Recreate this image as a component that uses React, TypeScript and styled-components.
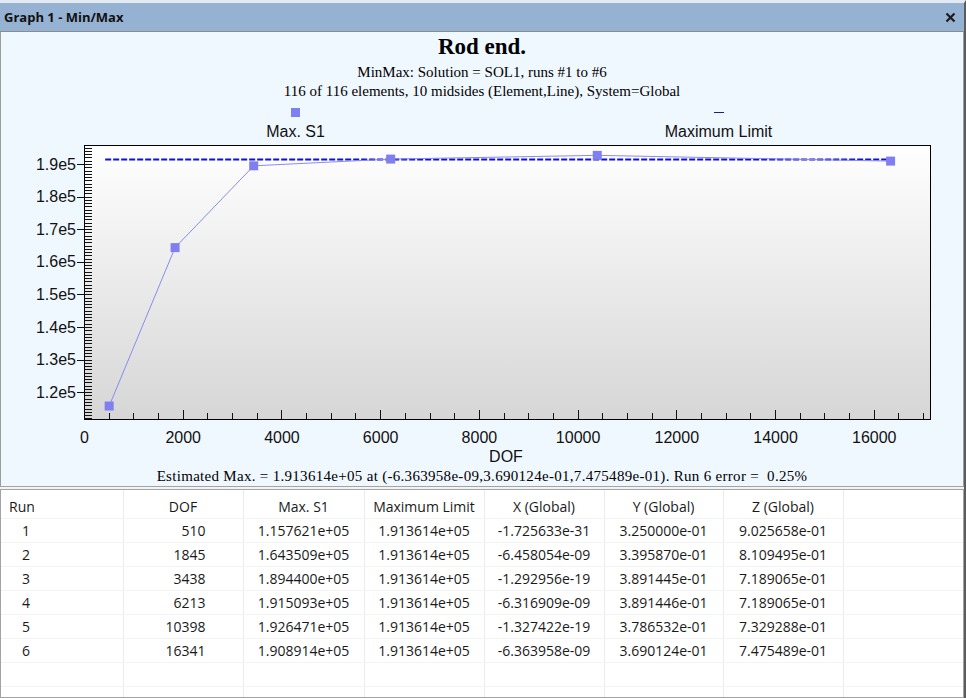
import styled, { createGlobalStyle } from 'styled-components';

type Run = {
  run: number;
  dof: number;
  maxS1: string;
  limit: string;
  x: string;
  y: string;
  z: string;
};

const runs: Run[] = [
  { run: 1, dof: 510, maxS1: '1.157621e+05', limit: '1.913614e+05', x: '-1.725633e-31', y: '3.250000e-01', z: '9.025658e-01' },
  { run: 2, dof: 1845, maxS1: '1.643509e+05', limit: '1.913614e+05', x: '-6.458054e-09', y: '3.395870e-01', z: '8.109495e-01' },
  { run: 3, dof: 3438, maxS1: '1.894400e+05', limit: '1.913614e+05', x: '-1.292956e-19', y: '3.891445e-01', z: '7.189065e-01' },
  { run: 4, dof: 6213, maxS1: '1.915093e+05', limit: '1.913614e+05', x: '-6.316909e-09', y: '3.891446e-01', z: '7.189065e-01' },
  { run: 5, dof: 10398, maxS1: '1.926471e+05', limit: '1.913614e+05', x: '-1.327422e-19', y: '3.786532e-01', z: '7.329288e-01' },
  { run: 6, dof: 16341, maxS1: '1.908914e+05', limit: '1.913614e+05', x: '-6.363958e-09', y: '3.690124e-01', z: '7.475489e-01' },
];

const LIMIT = 191361.4;

// plot mapping (svg coords, svg starts at x=1 / y=141 of the page)
const X0 = 83;
const PLOT_W = 846;
const PLOT_TOP = 4;
const PLOT_BOTTOM = 278;
const xs = (v: number) => X0 + v * 0.04936;
const ys = (v: number) => 23 + ((190000 - v) / 10000) * 32.6;

const GlobalStyle = createGlobalStyle`
  body {
    margin: 0;
    background: #ffffff;
  }
`;

const Window = styled.div`
  width: 966px;
  height: 698px;
  box-sizing: border-box;
  display: flex;
  flex-direction: column;
  background: #f3f3f3;
  border-top: 3px solid #e4eaf1;
  border-right: 2px solid #5c5c5c;
`;

const TitleBar = styled.div`
  height: 28px;
  flex: none;
  display: flex;
  align-items: center;
  justify-content: space-between;
  padding: 0 8px 0 4px;
  background: #96b2d2;
  border-bottom: 1px solid #8c8c8c;
  font-family: 'Open Sans', 'Liberation Sans', sans-serif;
  font-weight: 700;
  font-size: 13px;
  color: #111;
`;

const CloseButton = styled.button`
  border: none;
  background: none;
  padding: 0;
  width: 11px;
  height: 11px;
  display: flex;
  cursor: pointer;
`;

const ChartPanel = styled.div`
  flex: none;
  height: 454px;
  display: flex;
  flex-direction: column;
  align-items: center;
  background: #f0f8ff;
  border-left: 1px solid #9c9c9c;
  border-right: 1px solid #9c9c9c;
  border-bottom: 1px solid #a3a3a3;
`;

const ChartTitle = styled.div`
  margin-top: 3px;
  font-family: 'Liberation Serif', serif;
  font-weight: 700;
  font-size: 23px;
  line-height: 24px;
  color: #000;
`;

const SubTitle = styled.div<{ $first?: boolean }>`
  margin-top: ${p => (p.$first ? '4px' : '0')};
  font-family: 'Liberation Serif', serif;
  font-size: 15px;
  line-height: 19px;
  color: #000;
  white-space: pre;
`;

const Legend = styled.div`
  align-self: flex-start;
  margin-top: 7px;
  margin-left: 83px;
  width: ${PLOT_W}px;
  display: grid;
  grid-template-columns: 1fr 1fr;
`;

const LegendItem = styled.div`
  display: flex;
  flex-direction: column;
  align-items: center;
`;

const LegendMarker = styled.div<{ $kind: 'square' | 'dash' }>`
  height: 9px;
  display: flex;
  align-items: center;
  &::before {
    content: '';
    display: block;
    width: ${p => (p.$kind === 'square' ? '9px' : '10px')};
    height: ${p => (p.$kind === 'square' ? '9px' : '1px')};
    background: ${p => (p.$kind === 'square' ? '#7f7ff2' : '#1c1c8a')};
  }
`;

const LegendLabel = styled.div`
  margin-top: 6px;
  font-family: 'Liberation Sans', sans-serif;
  font-size: 16px;
  line-height: 18px;
  color: #111;
`;

const PlotSvg = styled.svg`
  display: block;
  flex: none;
  font-family: 'Liberation Sans', sans-serif;
`;

const Footer = styled.div`
  margin-top: 1px;
  font-family: 'Liberation Serif', serif;
  font-size: 15px;
  letter-spacing: 0.3px;
  line-height: 18px;
  color: #000;
  white-space: pre;
`;

const TablePanel = styled.div`
  flex: 1;
  margin-top: 2px;
  background: #ffffff;
  border: 1px solid #a3a3a3;
  overflow: hidden;
  display: flex;
`;

const Table = styled.table`
  width: 100%;
  height: 100%;
  table-layout: fixed;
  border-collapse: collapse;
  font-family: 'Open Sans', 'Liberation Sans', sans-serif;
  font-size: 14px;
  color: #1a1a1a;
`;

type Align = 'run' | 'dof' | 'center';

const Cell = styled.td<{ $align: Align }>`
  height: 23px;
  padding: 0;
  white-space: nowrap;
  border-right: 1px solid #ebebeb;
  border-bottom: 1px solid #f3f3f3;
  text-align: ${p => (p.$align === 'dof' ? 'right' : p.$align === 'run' ? 'left' : 'center')};
  padding-left: ${p => (p.$align === 'run' ? '21px' : '0')};
  padding-right: ${p => (p.$align === 'dof' ? '37px' : '0')};
  &:last-child {
    border-right: none;
  }
`;

const HeadCell = styled.th<{ $left?: boolean }>`
  height: 24px;
  padding: 4px 0 0 ${p => (p.$left ? '8px' : '0')};
  font-weight: 400;
  white-space: nowrap;
  text-align: ${p => (p.$left ? 'left' : 'center')};
  border-right: 1px solid #ebebeb;
  border-bottom: 1px solid #f3f3f3;
  &:last-child {
    border-right: none;
  }
`;

const FillerRow = styled.tr`
  height: auto;
`;

const columnWidths = [122, 120, 121, 120, 120, 119, 120];

const ChartPlot = () => {
  const yTicks: number[] = [];
  for (let v = 112000; v <= 195000; v += 1000) {
    const y = ys(v);
    if (y > PLOT_TOP && y < PLOT_BOTTOM) yTicks.push(v);
  }
  const xTicks: number[] = [];
  for (let v = 500; v <= 17000; v += 500) xTicks.push(v);
  const xLabels = [0, 2000, 4000, 6000, 8000, 10000, 12000, 14000, 16000];
  const yLabels = [120000, 130000, 140000, 150000, 160000, 170000, 180000, 190000];
  const points = runs.map(r => `${xs(r.dof)},${ys(parseFloat(r.maxS1))}`).join(' ');

  return (
    <PlotSvg width={962} height={325} viewBox="0 0 962 325">
      <defs>
        <linearGradient id="plotBg" x1="0" y1="0" x2="0" y2="1">
          <stop offset="0" stopColor="#ffffff" />
          <stop offset="1" stopColor="#d6d6d6" />
        </linearGradient>
      </defs>
      <rect
        x={X0 + 0.5}
        y={PLOT_TOP + 0.5}
        width={PLOT_W}
        height={PLOT_BOTTOM - PLOT_TOP}
        fill="url(#plotBg)"
        stroke="#000"
        strokeWidth={1}
      />
      {yTicks.map(v => {
        const y = Math.round(ys(v)) + 0.5;
        const major = v % 10000 === 0;
        return <line key={v} x1={major ? X0 - 7 : X0} x2={X0 + 8} y1={y} y2={y} stroke="#111" strokeWidth={1} />;
      })}
      {xTicks.map(v => {
        const x = Math.round(xs(v)) + 0.5;
        const major = v % 2000 === 0;
        return <line key={v} x1={x} x2={x} y1={PLOT_BOTTOM} y2={PLOT_BOTTOM - (major ? 9 : 6)} stroke="#111" strokeWidth={1} />;
      })}
      {yLabels.map(v => (
        <text key={v} x={75} y={ys(v) + 5.5} textAnchor="end" fontSize={16} fill="#111">
          {`${(v / 100000).toFixed(1)}e5`}
        </text>
      ))}
      {xLabels.map(v => (
        <text key={v} x={xs(v) + 0.5} y={302} textAnchor="middle" fontSize={16} fill="#111">
          {v}
        </text>
      ))}
      <text x={505} y={321} textAnchor="middle" fontSize={16} fill="#111">
        DOF
      </text>
      <line
        x1={xs(510) - 4}
        x2={xs(16341) - 2}
        y1={ys(LIMIT)}
        y2={ys(LIMIT)}
        stroke="#1010d0"
        strokeWidth={2}
        strokeDasharray="6 2"
      />
      <polyline points={points} fill="none" stroke="#8a8aee" strokeWidth={1} />
      {runs.map(r => (
        <rect
          key={r.run}
          x={xs(r.dof) - 4.5}
          y={ys(parseFloat(r.maxS1)) - 4.5}
          width={9}
          height={9}
          fill="#7f7ff2"
        />
      ))}
    </PlotSvg>
  );
};

export default function App() {
  return (
    <>
      <GlobalStyle />
      <Window>
        <TitleBar>
          <span>Graph 1 - Min/Max</span>
          <CloseButton aria-label="Close">
            <svg width="11" height="11" viewBox="0 0 11 11">
              <path d="M1.5 1.5 L9.5 9.5 M9.5 1.5 L1.5 9.5" stroke="#1b1b1b" strokeWidth={2.2} />
            </svg>
          </CloseButton>
        </TitleBar>
        <ChartPanel>
          <ChartTitle>Rod end.</ChartTitle>
          <SubTitle $first>MinMax: Solution = SOL1, runs #1 to #6</SubTitle>
          <SubTitle>116 of 116 elements, 10 midsides (Element,Line), System=Global</SubTitle>
          <Legend>
            <LegendItem>
              <LegendMarker $kind="square" />
              <LegendLabel>Max. S1</LegendLabel>
            </LegendItem>
            <LegendItem>
              <LegendMarker $kind="dash" />
              <LegendLabel>Maximum Limit</LegendLabel>
            </LegendItem>
          </Legend>
          <ChartPlot />
          <Footer>
            {'Estimated Max. = 1.913614e+05 at (-6.363958e-09,3.690124e-01,7.475489e-01). Run 6 error =  0.25%'}
          </Footer>
        </ChartPanel>
        <TablePanel>
          <Table>
            <colgroup>
              {columnWidths.map((w, i) => (
                <col key={i} style={{ width: w }} />
              ))}
              <col />
            </colgroup>
            <thead>
              <tr>
                <HeadCell $left>Run</HeadCell>
                <HeadCell>DOF</HeadCell>
                <HeadCell>Max. S1</HeadCell>
                <HeadCell>Maximum Limit</HeadCell>
                <HeadCell>X (Global)</HeadCell>
                <HeadCell>Y (Global)</HeadCell>
                <HeadCell>Z (Global)</HeadCell>
                <HeadCell />
              </tr>
            </thead>
            <tbody>
              {runs.map(r => (
                <tr key={r.run}>
                  <Cell $align="run">{r.run}</Cell>
                  <Cell $align="dof">{r.dof}</Cell>
                  <Cell $align="center">{r.maxS1}</Cell>
                  <Cell $align="center">{r.limit}</Cell>
                  <Cell $align="center">{r.x}</Cell>
                  <Cell $align="center">{r.y}</Cell>
                  <Cell $align="center">{r.z}</Cell>
                  <Cell $align="center" />
                </tr>
              ))}
              <tr>
                {columnWidths.map((_, i) => (
                  <Cell key={i} $align="center" />
                ))}
                <Cell $align="center" />
              </tr>
              <FillerRow>
                {columnWidths.map((_, i) => (
                  <Cell key={i} $align="center" />
                ))}
                <Cell $align="center" />
              </FillerRow>
            </tbody>
          </Table>
        </TablePanel>
      </Window>
    </>
  );
}
